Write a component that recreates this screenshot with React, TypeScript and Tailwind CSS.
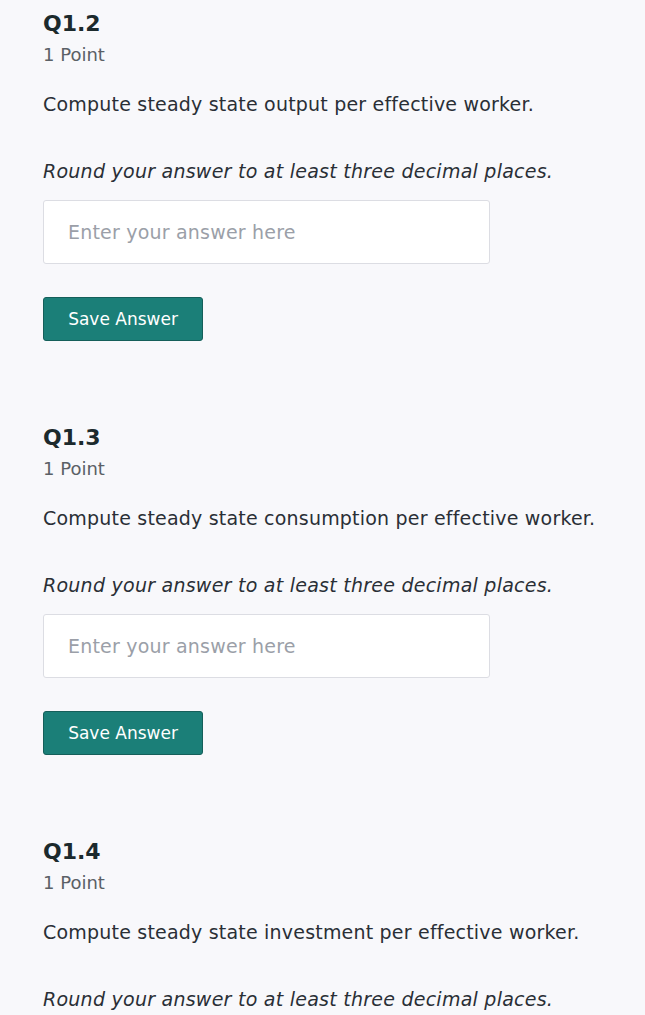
import React from "react";

const questions = [
  { id: "Q1.2", text: "Compute steady state output per effective worker." },
  { id: "Q1.3", text: "Compute steady state consumption per effective worker." },
  { id: "Q1.4", text: "Compute steady state investment per effective worker." },
];

const Question: React.FC<{ id: string; text: string; first: boolean }> = ({ id, text, first }) => {
  return (
    <div className={first ? "pt-[9px]" : "pt-[82px]"}>
      <h2 className="text-[22px] leading-[30px] font-bold text-[#1c2a2d]">{id}</h2>
      <p className="text-[18px] leading-[31px] text-[#5b6066]">1 Point</p>
      <p className="mt-[20px] text-[19px] leading-[28px] tracking-[0.2px] text-[#2a2f36]">{text}</p>
      <p className="mt-[39px] text-[19px] leading-[28px] tracking-[0.25px] italic text-[#2a2f36]">
        Round your answer to at least three decimal places.
      </p>
      <input
        type="text"
        placeholder="Enter your answer here"
        className="mt-[15px] block h-[64px] w-[447px] rounded-[3px] border border-[#dcdde3] bg-white px-[24px] text-[19px] tracking-[0.2px] text-[#2a2f36] placeholder:text-[#9b9fa8] outline-none"
      />
      <button className="mt-[33px] block h-[44px] w-[160px] rounded-[3px] border border-[#155f5a] bg-[#1b7f78] pt-[1px] text-[17px] text-white">
        Save Answer
      </button>
    </div>
  );
};

export default function App() {
  return (
    <div
      className="h-[1015px] overflow-hidden bg-[#f8f8fb] px-[43px]"
      style={{ fontFamily: '"DejaVu Sans", "Liberation Sans", sans-serif' }}
    >
      {questions.map((q, i) => (
        <Question key={q.id} id={q.id} text={q.text} first={i === 0} />
      ))}
    </div>
  );
}
